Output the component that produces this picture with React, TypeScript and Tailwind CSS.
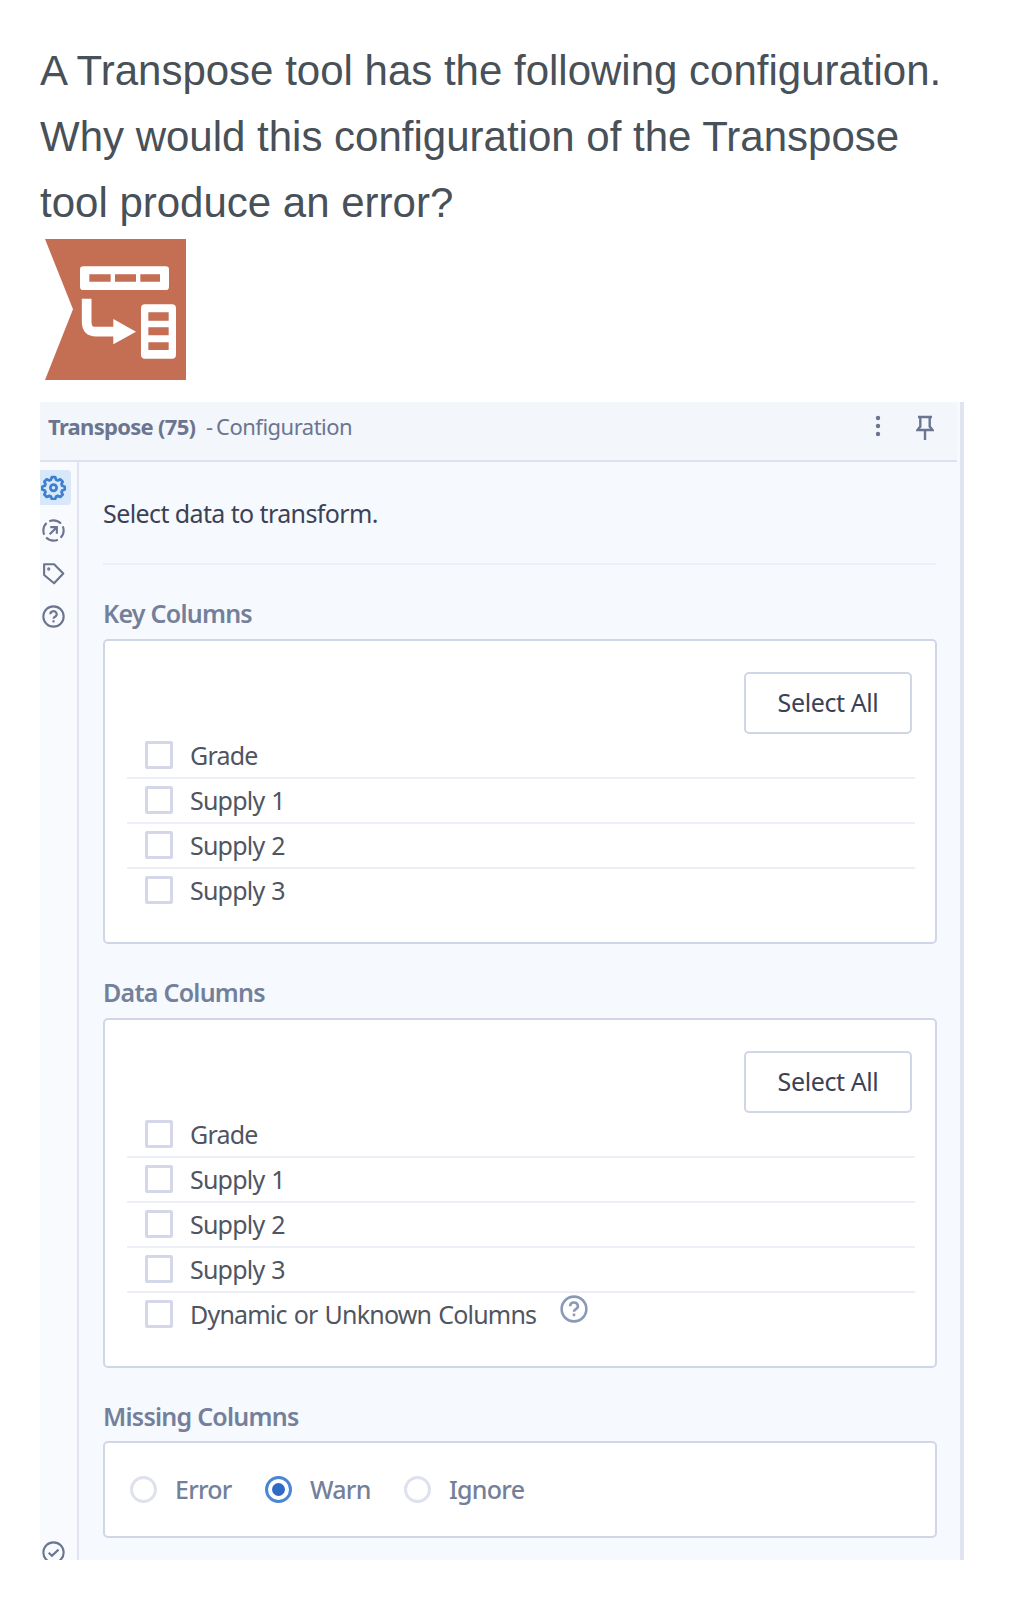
import type { ReactNode } from "react";

const keyColumns = ["Grade", "Supply 1", "Supply 2", "Supply 3"];
const dataColumns = [...keyColumns, "Dynamic or Unknown Columns"];
const missingOptions = [
  { label: "Error", className: "w-[135px]" },
  { label: "Warn", className: "w-[139px]" },
  { label: "Ignore", className: "" },
];

function TransposeLogo() {
  return (
    <svg
      viewBox="0 0 423 423"
      className="block ml-[5px] mt-[3px] size-[141px]"
    >
      <path d="M0 0H423V423H0L84 211Z" fill="#c46e54" />
      <rect x="105" y="82" width="267" height="71" rx="10" fill="#fff" />
      <path
        d="M133 106h64v22h-64zM210 106h63v22h-63zM286 106h59v22h-59z"
        fill="#c46e54"
      />
      <path
        d="M125 179V250Q125 278 153 278H208"
        fill="none"
        stroke="#fff"
        strokeWidth="29"
      />
      <path d="M205 240L273 278L205 316Z" fill="#fff" />
      <rect x="288" y="196" width="105" height="163" rx="12" fill="#fff" />
      <path
        d="M310 220h61v25h-61zM310 265h61v24h-61zM310 310h61v23h-61z"
        fill="#c46e54"
      />
    </svg>
  );
}

function Icon({
  children,
  className,
}: {
  children: ReactNode;
  className: string;
}) {
  return (
    <svg
      viewBox="0 0 24 24"
      fill="none"
      stroke="currentColor"
      strokeWidth="2.2"
      className={`block shrink-0 ${className}`}
    >
      {children}
    </svg>
  );
}

function HelpIcon({ className }: { className: string }) {
  return (
    <Icon className={className}>
      <circle cx="12" cy="12" r="10.6" />
      <path d="M8.7 9.6a3.3 3.1 0 1 1 4.9 2.6c-1.1.6-1.6 1-1.6 2.1" />
      <path d="M12 15.9v2.3" />
    </Icon>
  );
}

function Sidebar() {
  return (
    <div className="flex w-[39px] shrink-0 flex-col overflow-hidden border-r-2 border-[#dfe4f0] bg-[#f8fafd] text-[#6b7590]">
      <div className="mt-2 flex h-[35px] w-[31px] shrink-0 items-center rounded-r-sm bg-[#d8e8fb] pl-px text-[#3e7fd0]">
        <Icon className="size-[25px]">
          <path
            strokeLinejoin="round"
            strokeWidth="2.6"
            d="M10.4 2h3.2l.9 2.5 1.6.7 2.4-1.1 2.3 2.3-1.1 2.4.7 1.6 2.4.9v2.6l-2.4.9-.7 1.6 1.1 2.4-2.3 2.3-2.4-1.1-1.6.7-.9 2.4h-3.2l-.9-2.4-1.6-.7-2.4 1.1-2.3-2.3 1.1-2.4-.7-1.6-2.4-.9v-2.6l2.4-.9.7-1.6-1.1-2.4 2.3-2.3 2.4 1.1 1.6-.7Z"
          />
          <circle cx="12" cy="12.2" r="3" strokeWidth="2.6" />
        </Icon>
      </div>
      <Icon className="ml-[2px] mt-[14px] size-[23px]">
        <circle
          cx="12"
          cy="12"
          r="10.6"
          strokeDasharray="13.2 3.45"
          strokeDashoffset="4.8"
        />
        <path d="M8 16l7.2-7.2M8.6 8.5H15.5V15.5" />
      </Icon>
      <Icon className="ml-[2px] mt-5 size-[23px]">
        <path
          strokeLinejoin="round"
          d="M2.2 2.3H12.6L22.2 12L12.6 22.2L2.2 13.5Z"
        />
        <circle cx="7" cy="7.3" r="1" strokeWidth="1.4" />
      </Icon>
      <HelpIcon className="ml-[2px] mt-5 size-[23px]" />
      <Icon className="-mb-1 ml-[2px] mt-auto size-[23px]">
        <circle cx="12" cy="12" r="10.6" />
        <path d="M7 12.2l3.4 3.2L17.2 9" />
      </Icon>
    </div>
  );
}

function ColumnPicker({ columns }: { columns: string[] }) {
  return (
    <div className="w-[834px] rounded-[5px] border-2 border-[#d0d6e6] bg-white pl-[22px] pr-5 pt-[31px]">
      <button className="mr-[3px] ml-auto flex h-[62px] w-[168px] items-center justify-center rounded-[5px] border-2 border-[#d0d6e6] text-[25px] tracking-[-0.4px] text-[#3c4255]">
        Select All
      </button>
      <div className="pb-[28px]">
        {columns.map((column) => (
          <div
            key={column}
            className="flex h-[45px] items-start border-b-2 border-[#eceff6] pl-[18px] pt-[7px] last:border-transparent"
          >
            <span className="size-7 shrink-0 rounded-xs border-[3px] border-[#d3d7e9]" />
            <span className="ml-[17px] whitespace-nowrap text-[25px] leading-[29px] tracking-[-0.8px] [word-spacing:1.3px] text-[#505562]">
              {column}
            </span>
            {column === "Dynamic or Unknown Columns" && (
              <HelpIcon className="-mt-[5px] ml-6 size-7 text-[#8b99b8]" />
            )}
          </div>
        ))}
      </div>
    </div>
  );
}

function SectionTitle({ children }: { children: ReactNode }) {
  return (
    <h2 className="text-[25px] font-semibold leading-[34px] tracking-[-0.75px] text-[#74809a]">
      {children}
    </h2>
  );
}

export default function App() {
  return (
    <main className="h-[1611px] w-[1020px] overflow-hidden bg-white pl-10 pt-[38px] font-['Noto_Sans',sans-serif]">
      <h1 className="whitespace-nowrap font-['Liberation_Sans',Arial,sans-serif] text-[42px] leading-[66px] text-[#485058]">
        A Transpose tool has the following configuration.
        <br />
        Why would this configuration of the Transpose
        <br />
        tool produce an error?
      </h1>
      <TransposeLogo />

      <section className="mt-[22px] flex h-[1158px] w-[924px] flex-col overflow-hidden border-r-4 border-[#e0e3f0] bg-[#f6f9fe]">
        <header className="mr-[3px] flex h-[60px] shrink-0 items-start border-b-2 border-[#dde2ee] bg-[#f3f6fb] pl-2 text-[22px] leading-[30px] text-[#6b7590]">
          <span className="mt-[9px] w-[158px] whitespace-nowrap font-bold tracking-[-0.7px]">
            Transpose (75)
          </span>
          <span className="mt-[9px] w-[10px]">-</span>
          <span className="mt-[9px] tracking-[-0.5px]">Configuration</span>
          <svg
            viewBox="0 0 6 22"
            fill="currentColor"
            className="ml-auto mt-[13px] h-[22px] w-[6px]"
          >
            <circle cx="3" cy="3" r="2.2" />
            <circle cx="3" cy="11" r="2.2" />
            <circle cx="3" cy="19" r="2.2" />
          </svg>
          <svg
            viewBox="0 0 18 26"
            fill="none"
            stroke="currentColor"
            strokeWidth="2.4"
            className="ml-[35px] mr-[23px] mt-[13px] h-[26px] w-[18px]"
          >
            <path d="M2 2H16M4.3 2V11.5L1.5 15H16.5L13.7 11.5V2M9 15V25" />
          </svg>
        </header>
        <div className="flex min-h-0 flex-1">
          <Sidebar />
          <div className="pl-6">
            <p className="pt-[34px] text-[25px] leading-[34px] tracking-[-0.6px] text-[#3c4255]">
              Select data to transform.
            </p>
            <div className="mb-[31px] mt-[33px] h-0.5 w-[833px] bg-[#ecf0f6]" />
            <SectionTitle>Key Columns</SectionTitle>
            <div className="h-[9px]" />
            <ColumnPicker columns={keyColumns} />
            <div className="h-[31px]" />
            <SectionTitle>Data Columns</SectionTitle>
            <div className="h-[9px]" />
            <ColumnPicker columns={dataColumns} />
            <div className="h-[31px]" />
            <SectionTitle>Missing Columns</SectionTitle>
            <div className="mt-[8px] flex h-[97px] w-[834px] items-center rounded-[5px] border-2 border-[#d0d6e6] bg-white pl-[25px] text-[25px] font-medium tracking-[-0.75px] text-[#74809a]">
              {missingOptions.map(({ label, className }) => (
                <label
                  key={label}
                  className={`flex shrink-0 items-center ${className}`}
                >
                  {label === "Warn" ? (
                    <span className="flex size-[27px] items-center justify-center rounded-full border-3 border-[#4a86d5]">
                      <span className="size-[13px] rounded-full bg-[#2f6bc6]" />
                    </span>
                  ) : (
                    <span className="size-[27px] rounded-full border-[3px] border-[#dfe1ec]" />
                  )}
                  <span className="ml-[18px]">{label}</span>
                </label>
              ))}
            </div>
          </div>
        </div>
      </section>
    </main>
  );
}
